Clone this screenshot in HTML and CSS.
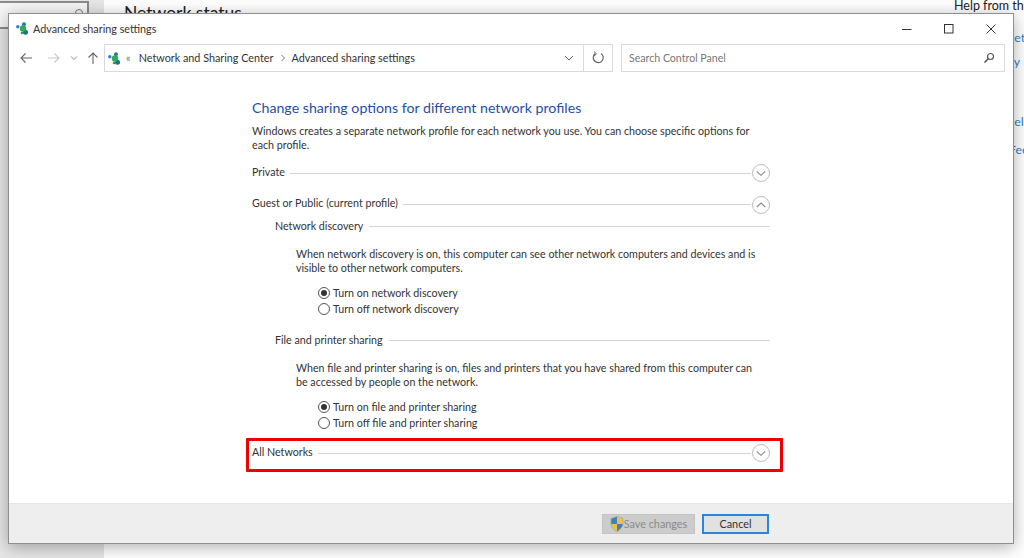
FILE: index.html
```html
<!DOCTYPE html>
<html lang="en">
<head>
<meta charset="utf-8">
<title>Advanced sharing settings</title>
<link rel="stylesheet" href="styles.css">
</head>
<body>
<div class="desktop">
  <aside class="bg-side"><div class="bg-search"><svg class="bg-search-icon" width="12" height="12" viewBox="0 0 12 12"><circle cx="6" cy="5" r="3.500" fill="none" stroke="#777"/><path d="M6 9v3" stroke="#777"/></svg></div></aside>
  <div class="bg-title">Network status</div>
  <div class="bg-help">Help from the web</div>
  <div class="bg-link l1">Internet</div>
  <div class="bg-link l2">by IP</div>
  <div class="bg-link l3">Help</div>
  <div class="bg-link l4">Feedback</div>

  <section class="window">
    <header class="titlebar">
      <svg class="net-icon" width="13" height="13" viewBox="0 0 13 13"><circle cx="1.800" cy="4.800" r="1.700" fill="#2a7fd0"/><circle cx="8" cy="2.300" r="2" fill="#1b7fa8"/><circle cx="9.500" cy="10.300" r="2.500" fill="#17708f"/><circle cx="7" cy="6.500" r="3.200" fill="#35a852"/><circle cx="6" cy="11" r="1.300" fill="#2fa04a"/></svg>
      <span class="title-text">Advanced sharing settings</span>
      <div class="win-controls">
        <svg width="12" height="12" viewBox="0 0 12 12"><path d="M1 6.500h9.500" stroke="#333" fill="none"/></svg>
        <svg width="12" height="12" viewBox="0 0 12 12"><rect x="1.500" y="1.500" width="8.500" height="8.500" stroke="#333" fill="none"/></svg>
        <svg width="12" height="12" viewBox="0 0 12 12"><path d="M1.500 1.500l9 9M10.500 1.500l-9 9" stroke="#333" fill="none"/></svg>
      </div>
    </header>

    <nav class="toolbar">
      <div class="nav-buttons">
        <svg class="back" width="14" height="12" viewBox="0 0 14 12"><path d="M13 6H2M6.500 1.500L2 6l4.500 4.500" stroke="#666" fill="none" stroke-width="1.100"/></svg>
        <svg class="forward" width="14" height="12" viewBox="0 0 14 12"><path d="M1 6h11M7.500 1.500L12 6l-4.500 4.500" stroke="#c8c8c8" fill="none" stroke-width="1.100"/></svg>
        <svg class="recent" width="8" height="6" viewBox="0 0 8 6"><path d="M1 1.500l3 3 3-3" stroke="#888" fill="none"/></svg>
        <svg class="up" width="12" height="14" viewBox="0 0 12 14"><path d="M6 13V2M1.500 6.500L6 2l4.500 4.500" stroke="#666" fill="none" stroke-width="1.100"/></svg>
      </div>
      <div class="address">
        <svg class="net-icon" width="13" height="13" viewBox="0 0 13 13"><circle cx="1.800" cy="4.800" r="1.700" fill="#2a7fd0"/><circle cx="8" cy="2.300" r="2" fill="#1b7fa8"/><circle cx="9.500" cy="10.300" r="2.500" fill="#17708f"/><circle cx="7" cy="6.500" r="3.200" fill="#35a852"/><circle cx="6" cy="11" r="1.300" fill="#2fa04a"/></svg>
        <span class="crumb-sep first">«</span>
        <span class="crumb">Network and Sharing Center</span>
        <svg class="crumb-arrow" width="6" height="8" viewBox="0 0 6 8"><path d="M1.500 1l3 3-3 3" stroke="#777" fill="none"/></svg>
        <span class="crumb">Advanced sharing settings</span>
        <svg class="addr-drop" width="10" height="6" viewBox="0 0 10 6"><path d="M1 1l4 4 4-4" stroke="#666" fill="none"/></svg>
        <span class="refresh"><svg width="14" height="14" viewBox="0 0 14 14"><path d="M4.200 2.600A5 5 0 1 0 10 2.400" stroke="#666" fill="none" stroke-width="1.200"/><path d="M3 .5l2.500 2.300L3 5" stroke="#666" fill="none"/></svg></span>
      </div>
      <div class="search">
        <span class="search-text">Search Control Panel</span>
        <svg width="12" height="12" viewBox="0 0 12 12"><circle cx="7.500" cy="4.500" r="3" stroke="#555" fill="none" stroke-width="1.200"/><path d="M5.200 6.800L1.500 10.500" stroke="#555" stroke-width="1.600"/></svg>
      </div>
    </nav>

    <main class="content">
      <h1 class="heading">Change sharing options for different network profiles</h1>
      <p class="intro">Windows creates a separate network profile for each network you use. You can choose specific options for each profile.</p>

      <div class="profile private">
        <span class="label">Private</span><i class="rule"></i>
        <svg class="chev" width="20" height="20" viewBox="0 0 20 20"><circle cx="10" cy="10" r="8.500" fill="#fff" stroke="#bdbdbd"/><path d="M5.800 8.300L10 12.300l4.200-4" stroke="#8a8a8a" fill="none" stroke-width="1.100"/></svg>
      </div>
      <div class="profile guest">
        <span class="label">Guest or Public (current profile)</span><i class="rule"></i>
        <svg class="chev chev-up" width="20" height="20" viewBox="0 0 20 20"><circle cx="10" cy="10" r="8.500" fill="#fff" stroke="#bdbdbd"/><path d="M5.800 12L10 8l4.200 4" stroke="#8a8a8a" fill="none" stroke-width="1.100"/></svg>
      </div>

      <div class="sub-head first-sub"><span>Network discovery</span><i class="rule"></i></div>
      <p class="desc">When network discovery is on, this computer can see other network computers and devices and is visible to other network computers.</p>
      <div class="radios">
        <label class="radio"><span class="dot on"></span>Turn on network discovery</label>
        <label class="radio"><span class="dot"></span>Turn off network discovery</label>
      </div>

      <div class="sub-head second-sub"><span>File and printer sharing</span><i class="rule"></i></div>
      <p class="desc">When file and printer sharing is on, files and printers that you have shared from this computer can be accessed by people on the network.</p>
      <div class="radios">
        <label class="radio"><span class="dot on"></span>Turn on file and printer sharing</label>
        <label class="radio"><span class="dot"></span>Turn off file and printer sharing</label>
      </div>

      <div class="profile all">
        <span class="label">All Networks</span><i class="rule"></i>
        <svg class="chev" width="20" height="20" viewBox="0 0 20 20"><circle cx="10" cy="10" r="8.500" fill="#fff" stroke="#bdbdbd"/><path d="M5.800 8.300L10 12.300l4.200-4" stroke="#8a8a8a" fill="none" stroke-width="1.100"/></svg>
      </div>
    </main>

    <footer class="footer">
      <button class="btn save" type="button">
        <svg width="14" height="16" viewBox="0 0 14 16"><path d="M7 .5l6 2v5.500c0 3.500-3 6-6 7.500-3-1.500-6-4-6-7.500V2.500z" fill="#e9c34f" stroke="#9a9a9a" stroke-width=".6"/><path d="M7 .8v7.200H1.300V2.700zM7 8h5.700c-.2 3-2.900 5.400-5.700 7.200z" fill="#3f7fc4"/></svg>
        Save changes
      </button>
      <button class="btn cancel" type="button">Cancel</button>
    </footer>
    <div class="highlight"></div>
  </section>
</div>
</body>
</html>
```

FILE: styles.css
```css
* { box-sizing: border-box; }
html, body { margin: 0; height: 100%; }
body { background: #fff; font-family: "Lato", "Open Sans", sans-serif; overflow: hidden; }
.desktop { position: relative; width: 1024px; height: 558px; overflow: hidden; background: #fff; }

.bg-side { position: absolute; left: 0; top: 0; width: 104px; height: 558px; background: #e6e6e6; }
.bg-search { position: absolute; left: -2px; top: 1px; width: 91px; height: 28px; border: 2px solid #8c8c8c; background: #f6f6f6; }
.bg-search-icon { position: absolute; left: 73px; top: 5px; }
.bg-title { position: absolute; left: 124px; top: 1px; font-size: 17.500px; line-height: 24px; color: #222; }
.bg-help { position: absolute; left: 954px; top: -2px; font-size: 12.500px; line-height: 16px; color: #222; white-space: nowrap; }
.bg-link { position: absolute; font-size: 12.300px; line-height: 16px; color: #2a7fd0; white-space: nowrap; }
.l1 { top: 30px; left: 982px; }
.l2 { top: 54px; left: 1007px; }
.l3 { top: 114px; left: 1005px; }
.l4 { top: 142px; left: 1009px; }

.window { position: absolute; left: 8px; top: 13px; width: 1006px; height: 531px; background: #fff; border: 1px solid #8f8f8f; box-shadow: 0 3px 16px rgba(0,0,0,.32); display: flex; flex-direction: column; color: #333; }

.titlebar { height: 29px; display: flex; align-items: center; padding-left: 7px; flex: none; }
.title-text { margin-left: 4px; font-size: 10.800px; color: #333; }
.win-controls { margin-left: auto; display: flex; gap: 30px; padding-right: 16px; }
.win-controls svg { display: block; }

.toolbar { height: 30px; display: flex; align-items: center; padding: 0 9px 0 0; flex: none; }
.nav-buttons { width: 95px; padding-left: 10px; display: flex; align-items: center; flex: none; }
.forward { margin-left: 14px; }
.recent { margin-left: 9px; }
.up { margin-left: 9px; }
.address { width: 509px; height: 28px; border: 1px solid #d9d9d9; display: flex; align-items: center; padding-left: 3px; font-size: 10.800px; color: #333; flex: none; }
.crumb { margin-top: -2px; }
.crumb-sep { margin: -2px 8px 0 5px; color: #777; }
.crumb-arrow { margin: 0 5px 0 7px; }
.addr-drop { margin-left: auto; margin-right: 9px; }
.refresh { width: 29px; height: 26px; border-left: 1px solid #d9d9d9; display: flex; align-items: center; justify-content: center; }
.search { margin-left: 8px; width: 384px; height: 28px; border: 1px solid #d9d9d9; display: flex; align-items: center; justify-content: space-between; padding: 0 9px 0 7px; font-size: 10.600px; color: #777; flex: none; }
.search-text { margin-top: -1px; }

.content { flex: 1; padding: 25px 243px 0 243px; font-size: 10.700px; line-height: 14px; color: #333; }
.heading { margin: 0; font-size: 14.200px; line-height: 20px; font-weight: 400; color: #1f4fa8; }
.intro { margin: 6px 0 0; }
.profile, .sub-head { display: flex; align-items: center; height: 14px; white-space: nowrap; }
.label { margin-top: -2px; }
.rule { flex: 1; height: 1px; background: #d4d4d4; margin-left: 5px; }
.chev { flex: none; margin-right: -1px; }
.chev-up { margin-top: 2px; }
.private { margin-top: 14px; }
.guest { margin-top: 17px; }
.all { margin-top: 16px; }
.sub-head { margin-left: 23px; }
.first-sub { margin-top: 8px; }
.second-sub { margin-top: 17px; }
.sub-head .rule { margin-left: 6px; }
.desc { margin: 14px 8px 0 44px; }
.radios { margin: 11px 0 0 66px; display: flex; flex-direction: column; gap: 2px; }
.radio { display: flex; align-items: center; height: 14px; }
.dot { width: 12px; height: 12px; margin-right: 3px; border: 1px solid #555; border-radius: 50%; background: #fff; position: relative; flex: none; }
.dot.on::after { content: ""; position: absolute; left: 2px; top: 2px; width: 6px; height: 6px; border-radius: 50%; background: #333; }

.footer { height: 40px; flex: none; background: #eeeeee; border-top: 1px solid #e6e6e6; display: flex; align-items: center; justify-content: flex-end; gap: 7px; padding: 0 244px 0 0; }
.btn { height: 20px; padding: 0; font-family: inherit; font-size: 10.800px; display: flex; align-items: center; justify-content: center; }
.save { width: 93px; background: #cccccc; border: 1px solid #c4c4c4; color: #8a8a8a; gap: 0; }
.cancel { width: 67px; background: #e1e1e1; border: 2px solid #2a86d8; color: #333; }

.highlight { position: absolute; left: 237px; top: 424px; width: 537px; height: 34px; border: 3px solid #ee0000; border-radius: 1px; pointer-events: none; }
```
